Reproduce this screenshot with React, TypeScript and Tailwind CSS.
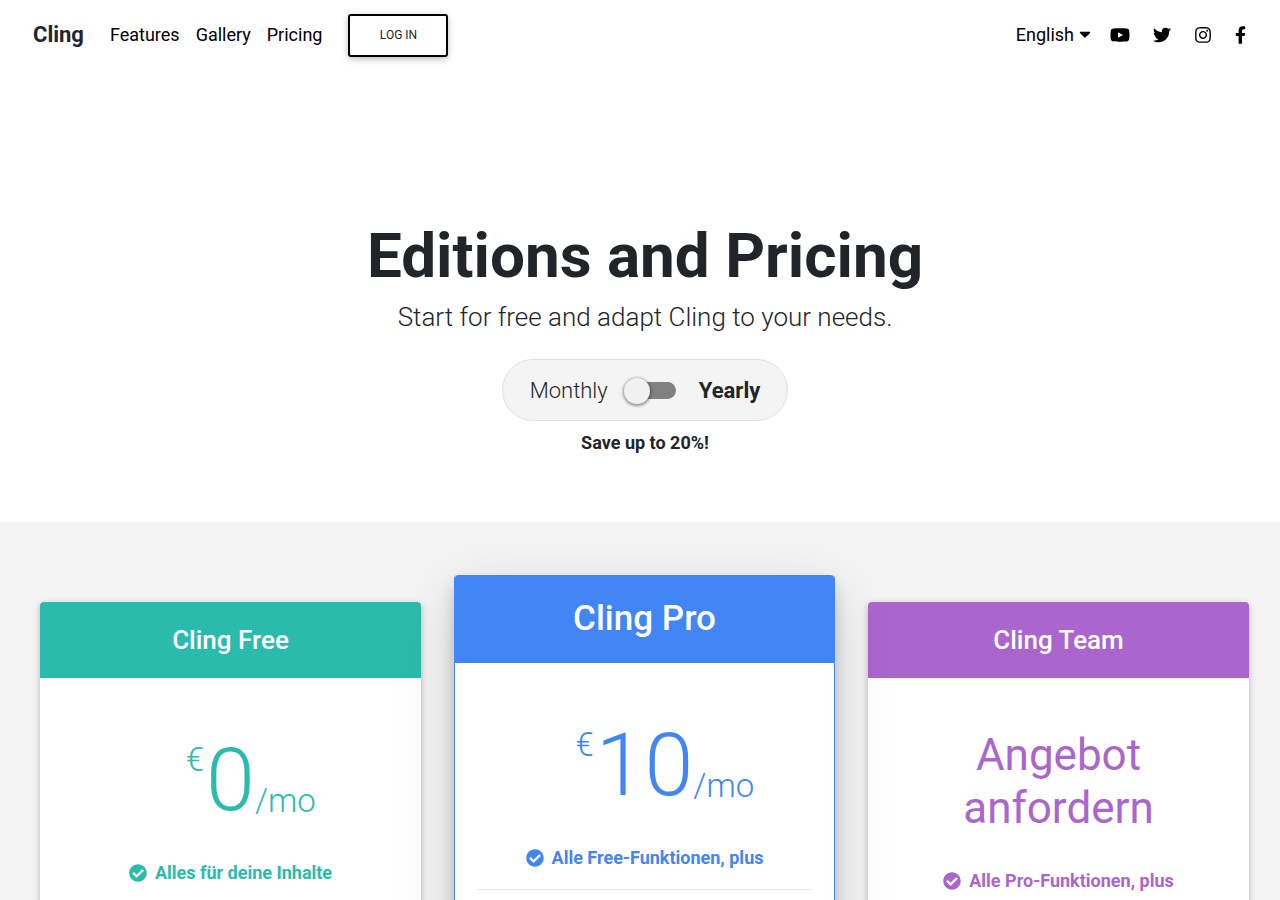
import React, { useState } from 'react';
import { FaYoutube, FaTwitter, FaInstagram, FaFacebookF, FaCheckCircle, FaCaretDown } from 'react-icons/fa';

interface PlanProps {
  name: string;
  headerClass: string;
  cardClass: string;
  textClass: string;
  features: string[];
  children: React.ReactNode;
}

const navLinks = ['Features', 'Gallery', 'Pricing'];

const Navbar: React.FC = () => (
  <nav className="flex h-[70px] items-center pl-[33px] pr-[34px] text-lg text-black">
    <a href="#" className="mr-[26px] text-[22px] font-bold text-[#212529]">Cling</a>
    <div className="flex gap-4">
      {navLinks.map(link => (
        <a key={link} href="#">{link}</a>
      ))}
    </div>
    <button className="ml-[26px] h-[43px] w-[100px] rounded-[3px] border-2 border-black bg-white text-xs text-[#212529] uppercase shadow-[0_2px_5px_rgba(0,0,0,0.16),0_2px_10px_rgba(0,0,0,0.12)]">
      Log in
    </button>

    <div className="ml-auto flex items-center">
      <div className="relative">
        <select aria-label="Language" defaultValue="en" className="field-sizing-content appearance-none bg-transparent pr-4">
          <option value="en">English</option>
          <option value="de">Deutsch</option>
        </select>
        <FaCaretDown size={18} className="pointer-events-none absolute top-1 -right-1" />
      </div>
      <div className="ml-5 flex items-center gap-[23px]">
        <a href="#" aria-label="YouTube"><FaYoutube size={20} /></a>
        <a href="#" aria-label="Twitter"><FaTwitter size={18} /></a>
        <a href="#" aria-label="Instagram"><FaInstagram size={18} /></a>
        <a href="#" aria-label="Facebook"><FaFacebookF className="h-[18px] w-[11px]" /></a>
      </div>
    </div>
  </nav>
);

const Plan: React.FC<PlanProps> = ({ name, headerClass, cardClass, textClass, features, children }) => (
  <article className={`rounded bg-white text-center ${cardClass}`}>
    <h2 className={`rounded-t font-medium text-white ${headerClass}`}>{name}</h2>
    <div className={`px-[22px] pb-10 ${textClass}`}>
      {children}
      <ul>
        {features.map(feature => (
          <li key={feature} className="flex items-center justify-center gap-2 border-b border-gray-200 pb-[17px] text-lg font-bold">
            <FaCheckCircle size={18} /> {feature}
          </li>
        ))}
      </ul>
    </div>
  </article>
);

// amount stays in the middle of the card, currency and period hang on its sides
const Price: React.FC<{ amount: number }> = ({ amount }) => (
  <div className="mb-[26px] grid grid-cols-[1fr_auto_1fr] pt-[49px] font-light">
    <span className="pt-3 pr-0.5 text-right text-[33px] leading-[42px]">€</span>
    <span className="text-[88px] leading-[106px]">{amount}</span>
    <span className="self-end pb-[11px] text-left text-[33px] leading-[42px]">/mo</span>
  </div>
);

const App: React.FC = () => {
  const [yearly, setYearly] = useState(false);
  const amount = yearly ? 8 : 10;

  return (
    <div className="min-h-screen bg-white font-[Roboto,sans-serif] text-[#212529]">
      <Navbar />

      <header className="flex flex-col items-center pt-[149px] pb-[65px] pl-2.5 text-center">
        <h1 className="text-[62px] leading-[74px] font-bold">Editions and Pricing</h1>
        <p className="mt-2 text-[26px] leading-8 font-light">Start for free and adapt Cling to your needs.</p>
        <label className="mt-[26px] flex h-[62px] items-center rounded-full border border-[#e0e0e0] bg-[#f4f4f4] px-[27px] text-[22px]">
          <span className="font-light">Monthly</span>
          <input
            type="checkbox"
            role="switch"
            checked={yearly}
            onChange={e => setYearly(e.target.checked)}
            className="relative mr-[23px] ml-[19px] h-[17px] w-[49px] appearance-none rounded-full bg-[#818181] before:absolute before:-top-1 before:-left-[3px] before:size-[26px] before:rounded-full before:bg-[#f1f1f1] before:shadow-[0_1px_3px_1px_rgba(0,0,0,0.4)] checked:before:left-[26px]"
          />
          <span className="font-bold">Yearly</span>
        </label>
        <p className="mt-2 text-lg leading-7 font-bold">Save up to 20%!</p>
      </header>

      <main className="grid grid-cols-3 gap-[33px] bg-[#f4f4f4] pt-[53px] pr-[31px] pb-20 pl-10">
        <Plan
          name="Cling Free"
          headerClass="bg-[#2bbbad] text-[26px] leading-[76px]"
          cardClass="mt-[27px] shadow-[0_2px_5px_rgba(0,0,0,0.16),0_2px_10px_rgba(0,0,0,0.12)]"
          textClass="text-[#2bbbad]"
          features={['Alles für deine Inhalte']}
        >
          <Price amount={0} />
        </Plan>
        <Plan
          name="Cling Pro"
          headerClass="bg-[#4285f4] text-[35px] leading-[88px]"
          cardClass="relative z-10 border-x border-[#4285f4] shadow-[0_12px_15px_rgba(0,0,0,0.18),0_17px_60px_rgba(0,0,0,0.15)]"
          textClass="text-[#4285f4]"
          features={['Alle Free-Funktionen, plus']}
        >
          <Price amount={amount} />
        </Plan>
        <Plan
          name="Cling Team"
          headerClass="bg-[#aa66cc] text-[26px] leading-[76px]"
          cardClass="mt-[27px] shadow-[0_2px_5px_rgba(0,0,0,0.16),0_2px_10px_rgba(0,0,0,0.12)]"
          textClass="text-[#aa66cc]"
          features={['Alle Pro-Funktionen, plus']}
        >
          <p className="mx-auto mb-8 max-w-[240px] pt-[51px] text-[44px] leading-[53px]">Angebot anfordern</p>
        </Plan>
      </main>
    </div>
  );
};

export default App;
